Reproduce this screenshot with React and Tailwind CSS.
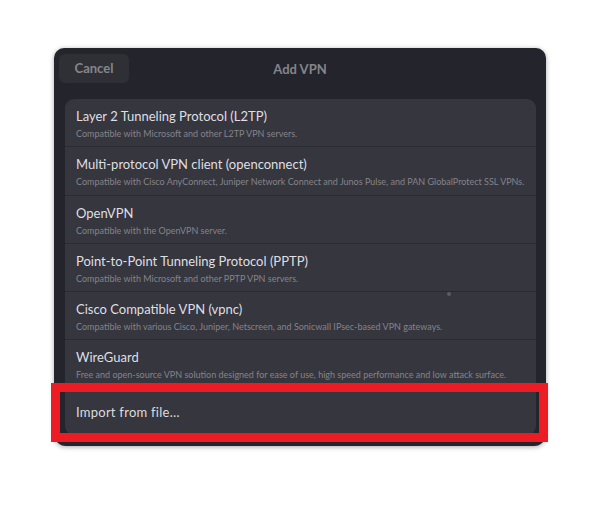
const rows = [
  ["Layer 2 Tunneling Protocol (L2TP)", "Compatible with Microsoft and other L2TP VPN servers."],
  ["Multi-protocol VPN client (openconnect)", "Compatible with Cisco AnyConnect, Juniper Network Connect and Junos Pulse, and PAN GlobalProtect SSL VPNs."],
  ["OpenVPN", "Compatible with the OpenVPN server."],
  ["Point-to-Point Tunneling Protocol (PPTP)", "Compatible with Microsoft and other PPTP VPN servers."],
  ["Cisco Compatible VPN (vpnc)", "Compatible with various Cisco, Juniper, Netscreen, and Sonicwall IPsec-based VPN gateways."],
  ["WireGuard", "Free and open-source VPN solution designed for ease of use, high speed performance and low attack surface."],
];

export default function App() {
  return (
    <div className="relative h-[506px] w-[600px] overflow-hidden bg-white pt-[48px] pl-[54px] font-['Lato',sans-serif]">
      <div className="h-[398px] w-[492px] rounded-t-[10px] rounded-b-[12px] bg-[#24242c] shadow-[0_1px_5px_rgba(0,0,0,0.35)]">
        <div className="relative flex h-[51px] items-start px-[5px] pt-[6px]">
          <button className="h-[29px] w-[70px] rounded-[6px] bg-[#2f3035] text-[13px] font-bold text-[#85868a]">Cancel</button>
          <div className="absolute inset-x-0 top-[12px] text-center text-[13px] font-bold text-[#85858a]">Add VPN</div>
        </div>
        <div className="ml-[11px] w-[471px] overflow-hidden rounded-[9px] bg-[#36363f]">
          {rows.map(([title, sub]) => (
            <div key={title} className="flex h-[48.3px] flex-col border-b border-[#2a2a31] pl-[11px] pt-[7px]">
              <div className="text-[13px] leading-[20px] text-[#dfdfe2]">{title}</div>
              <div className="mt-[1px] whitespace-nowrap text-[9px] leading-[13px] text-[#84848a]">{sub}</div>
            </div>
          ))}
          <div className="flex h-[46px] items-center pl-[11px] pt-[2px] text-[13px] tracking-[0.25px] text-[#dcdcde]">Import from file…</div>
        </div>
      </div>
      <div className="absolute left-[51px] top-[383px] h-[59px] w-[497px] border-[9px] border-[#ed1c24]" />
      <div className="absolute left-[447px] top-[292px] size-[4px] rounded-full bg-[#5c5c66]" />
    </div>
  );
}
